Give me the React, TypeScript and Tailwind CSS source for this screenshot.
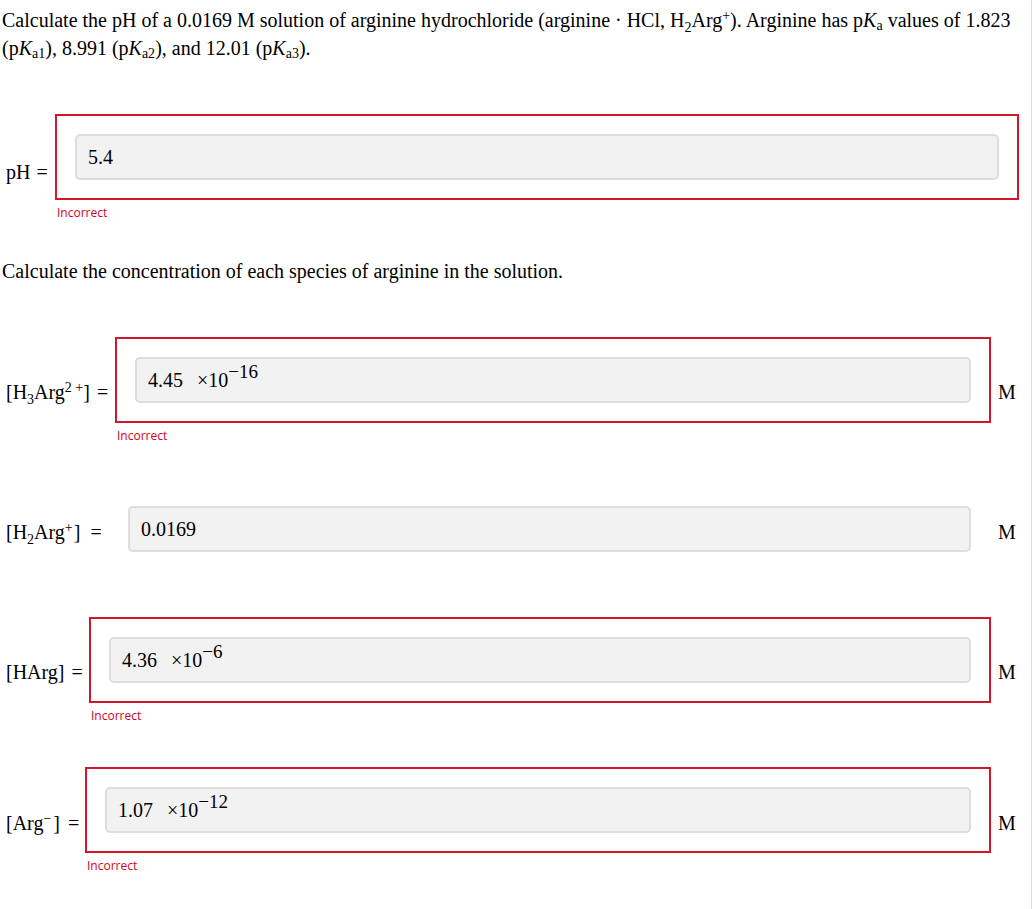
import React from "react";

const serif = { fontFamily: '"Liberation Serif", "Times New Roman", serif' };

function Sub({ children, d = 5 }: { children: React.ReactNode; d?: number }) {
  return (
    <span className="relative text-[14px] leading-[0]" style={{ top: d }}>
      {children}
    </span>
  );
}

function Sup({ children }: { children: React.ReactNode }) {
  return <span className="relative -top-[7px] text-[14px] leading-[0]">{children}</span>;
}

function Eq({ gap }: { gap: number }) {
  return (
    <span className="inline-block" style={{ marginLeft: gap }}>
      =
    </span>
  );
}

function Sci({ m, e }: { m: string; e: string }) {
  return (
    <span>
      {m}
      <span className="ml-[14px]">×10</span>
      <span className="relative -top-[9px] text-[19px] leading-[0]">−{e}</span>
    </span>
  );
}

function Incorrect({ left }: { left: number }) {
  return (
    <div
      className="mt-[5px] h-[16px] text-[12px] leading-[16px] text-[#d0021b]"
      style={{ marginLeft: left, fontFamily: '"Open Sans", "Noto Sans", sans-serif' }}
    >
      Incorrect
    </div>
  );
}

function Row({
  label,
  labelW,
  labelTop,
  value,
  red,
  unit,
  boxRight,
}: {
  label: React.ReactNode;
  labelW: number;
  labelTop: number;
  value: React.ReactNode;
  red: boolean;
  unit: boolean;
  boxRight: number;
}) {
  return (
    <div className="flex items-start">
      <div className="shrink-0 pl-[6px] leading-[28px] whitespace-nowrap" style={{ width: labelW, paddingTop: labelTop }}>
        {label}
      </div>
      <div
        className={"flex-1 border-2 p-[18px] " + (red ? "border-[#d0182a]" : "border-transparent")}
        style={{ marginRight: boxRight }}
      >
        <div className="h-[46px] rounded-[5px] border-2 border-[#dddddd] bg-[#f2f2f2] pl-[11px] pt-[7px] text-[20px] leading-[28px] text-black">
          {value}
        </div>
      </div>
      {unit && (
        <div className="w-[40px] shrink-0 pl-[7px] leading-[28px]" style={{ paddingTop: labelTop }}>
          M
        </div>
      )}
    </div>
  );
}

export default function App() {
  return (
    <div className="min-h-[909px] w-[1032px] border-r border-[#dddddd] bg-white text-[20px] text-black" style={serif}>
      <div className="pl-[2px] pt-[6px] leading-[28px] whitespace-nowrap">
        <p>
          Calculate the pH of a 0.0169 M solution of arginine hydrochloride (arginine · HCl, H<Sub>2</Sub>Arg
          <Sup>+</Sup>). Arginine has p<i>K</i>
          <Sub d={3}>a</Sub> values of 1.823
        </p>
        <p>
          (p<i>K</i>
          <Sub d={3}>a1</Sub>), 8.991 (p<i>K</i>
          <Sub d={3}>a2</Sub>), and 12.01 (p<i>K</i>
          <Sub d={3}>a3</Sub>).
        </p>
      </div>

      <div className="mt-[52px]">
        <Row
          label={
            <span>
              pH <Eq gap={1} />
            </span>
          }
          labelW={55}
          labelTop={44}
          value="5.4"
          red
          unit={false}
          boxRight={12}
        />
      </div>
      <Incorrect left={57} />

      <p className="mt-[36px] pl-[2px] leading-[28px]">Calculate the concentration of each species of arginine in the solution.</p>

      <div className="mt-[52px]">
        <Row
          label={
            <span>
              [H<Sub>3</Sub>Arg<Sup>2 +</Sup>] <Eq gap={2} />
            </span>
          }
          labelW={115}
          labelTop={41}
          value={<Sci m="4.45" e="16" />}
          red
          unit
          boxRight={0}
        />
      </div>
      <Incorrect left={117} />

      <div className="mt-[42px]">
        <Row
          label={
            <span>
              [H<Sub>2</Sub>Arg<Sup>+</Sup>
              <span className="ml-[1px]">]</span> <Eq gap={5} />
            </span>
          }
          labelW={108}
          labelTop={32}
          value="0.0169"
          red={false}
          unit
          boxRight={0}
        />
      </div>

      <div className="mt-[45px]">
        <Row
          label={
            <span>
              [HArg] <Eq gap={2} />
            </span>
          }
          labelW={89}
          labelTop={41}
          value={<Sci m="4.36" e="6" />}
          red
          unit
          boxRight={0}
        />
      </div>
      <Incorrect left={91} />

      <div className="mt-[43px]">
        <Row
          label={
            <span>
              [Arg<Sup>−</Sup>
              <span className="ml-[2px]">]</span> <Eq gap={3} />
            </span>
          }
          labelW={85}
          labelTop={42}
          value={<Sci m="1.07" e="12" />}
          red
          unit
          boxRight={0}
        />
      </div>
      <Incorrect left={87} />
    </div>
  );
}
